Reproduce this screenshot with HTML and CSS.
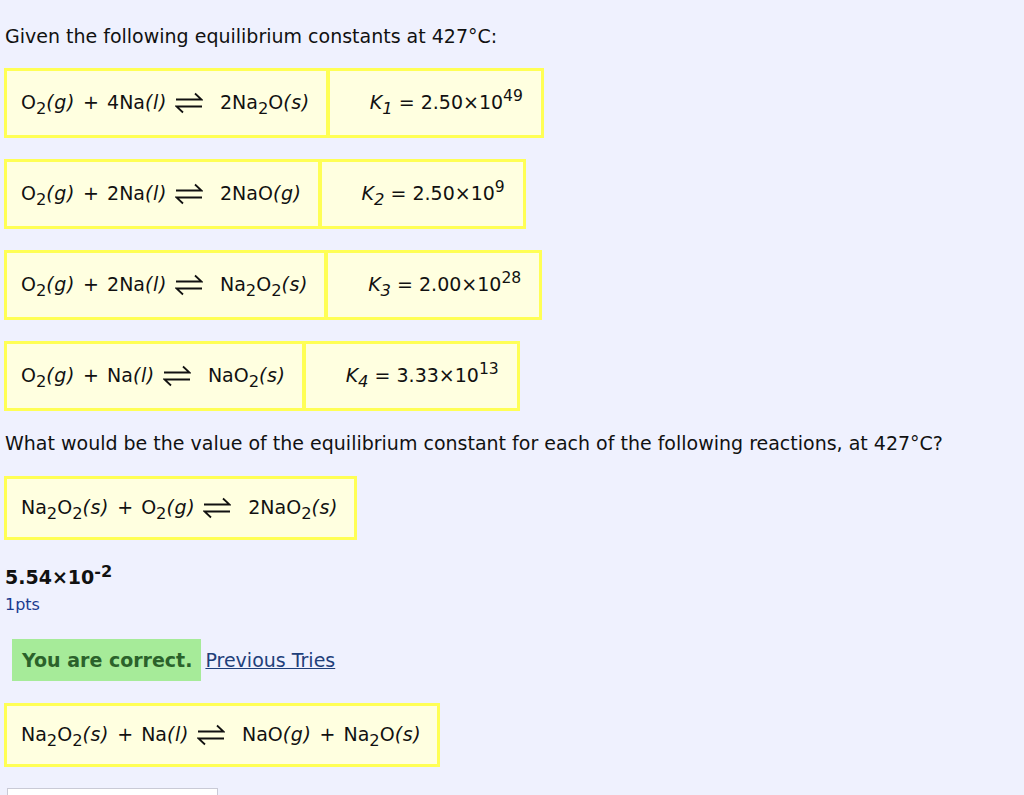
FILE: index.html
```html
<!DOCTYPE html>
<html>
<head>
<meta charset="utf-8">
<link rel="stylesheet" href="styles.css">
</head>
<body>
<div class="page">
  <p class="intro">Given the following equilibrium constants at 427°C:</p>

  <div class="eq-box">
    <div class="cell eq">O<sub>2</sub><i>(g)</i> + 4Na<i>(l)</i> <svg class="arrow" viewBox="0 0 28 22" width="28" height="22"><path d="M1 7.5H26.5L20 1.5M27 14.5H1.5L8 20.5" /></svg> 2Na<sub>2</sub>O<i>(s)</i></div>
    <div class="cell k"><i>K<sub>1</sub></i> = 2.50×10<sup>49</sup></div>
  </div>

  <div class="eq-box">
    <div class="cell eq">O<sub>2</sub><i>(g)</i> + 2Na<i>(l)</i> <svg class="arrow" viewBox="0 0 28 22" width="28" height="22"><path d="M1 7.5H26.5L20 1.5M27 14.5H1.5L8 20.5" /></svg> 2NaO<i>(g)</i></div>
    <div class="cell k"><i>K<sub>2</sub></i> = 2.50×10<sup>9</sup></div>
  </div>

  <div class="eq-box">
    <div class="cell eq">O<sub>2</sub><i>(g)</i> + 2Na<i>(l)</i> <svg class="arrow" viewBox="0 0 28 22" width="28" height="22"><path d="M1 7.5H26.5L20 1.5M27 14.5H1.5L8 20.5" /></svg> Na<sub>2</sub>O<sub>2</sub><i>(s)</i></div>
    <div class="cell k"><i>K<sub>3</sub></i> = 2.00×10<sup>28</sup></div>
  </div>

  <div class="eq-box">
    <div class="cell eq">O<sub>2</sub><i>(g)</i> + Na<i>(l)</i> <svg class="arrow" viewBox="0 0 28 22" width="28" height="22"><path d="M1 7.5H26.5L20 1.5M27 14.5H1.5L8 20.5" /></svg> NaO<sub>2</sub><i>(s)</i></div>
    <div class="cell k"><i>K<sub>4</sub></i> = 3.33×10<sup>13</sup></div>
  </div>

  <p class="question">What would be the value of the equilibrium constant for each of the following reactions, at 427°C?</p>

  <div class="eq-box single">
    <div class="cell eq">Na<sub>2</sub>O<sub>2</sub><i>(s)</i> + O<sub>2</sub><i>(g)</i> <svg class="arrow" viewBox="0 0 28 22" width="28" height="22"><path d="M1 7.5H26.5L20 1.5M27 14.5H1.5L8 20.5" /></svg> 2NaO<sub>2</sub><i>(s)</i></div>
  </div>

  <div class="answer">5.54×10<sup>-2</sup></div>
  <div class="pts">1pts</div>

  <div class="feedback">
    <span class="correct">You are correct.</span>
    <a class="tries" href="#">Previous Tries</a>
  </div>

  <div class="eq-box single second">
    <div class="cell eq">Na<sub>2</sub>O<sub>2</sub><i>(s)</i> + Na<i>(l)</i> <svg class="arrow" viewBox="0 0 28 22" width="28" height="22"><path d="M1 7.5H26.5L20 1.5M27 14.5H1.5L8 20.5" /></svg> NaO<i>(g)</i> + Na<sub>2</sub>O<i>(s)</i></div>
  </div>

  <div class="input-box"></div>
</div>
</body>
</html>
```

FILE: styles.css
```css
html, body {
  margin: 0;
  padding: 0;
  background: #eff1fe;
}
body {
  font-family: "DejaVu Sans", Verdana, sans-serif;
  font-size: 19px;
  color: #111;
  height: 795px;
  overflow: hidden;
}
.page {
  padding: 0 0 0 4px;
}
p {
  margin: 0;
}
.intro {
  padding-top: 25px;
  padding-left: 1px;
  line-height: 22px;
  margin-bottom: 21px;
}
.eq-box {
  display: flex;
  width: max-content;
  border: 3px solid #ffff55;
  background: #ffffe0;
  margin-bottom: 21px;
}
.cell {
  height: 64px;
  box-sizing: border-box;
  white-space: nowrap;
  line-height: 22px;
  padding-top: 20px;
}
.cell.eq {
  padding-left: 14px;
  padding-right: 16px;
  word-spacing: 2px;
}
.cell.eq i {
  letter-spacing: 0.6px;
}
.cell.k {
  border-left: 4px solid #ffff55;
  padding-left: 40px;
  padding-right: 18px;
}
sub {
  font-size: 0.86em;
  vertical-align: -0.3em;
  line-height: 0;
}
sup {
  font-size: 0.82em;
  vertical-align: 0.5em;
  line-height: 0;
}
.arrow {
  display: inline-block;
  vertical-align: -5px;
  margin: 0 9px 0 0;
}
.arrow path {
  fill: none;
  stroke: #111;
  stroke-width: 1.8;
}
.question {
  line-height: 22px;
  padding-left: 1px;
  margin-top: 11px;
  margin-bottom: 22px;
}
.eq-box.single .cell {
  height: 58px;
  padding-top: 17px;
}
.eq-box.single {
  margin-bottom: 26px;
}
.answer {
  font-weight: bold;
  padding-left: 1px;
  line-height: 22px;
}
.answer sup {
  font-size: 0.85em;
  vertical-align: 0.45em;
}
.pts {
  font-size: 16px;
  color: #1b3b8f;
  padding-left: 1px;
  margin-top: 8px;
  line-height: 18px;
}
.feedback {
  display: flex;
  align-items: center;
  margin-top: 25px;
  padding-left: 8px;
  margin-bottom: 22px;
}
.correct {
  background: #a6eb99;
  color: #2b622b;
  font-weight: bold;
  padding: 0 9px 0 10px;
  height: 42px;
  line-height: 42px;
}
.tries {
  color: #1f3f7a;
  text-decoration: underline;
  margin-left: 4px;
}
.eq-box.second {
  margin-bottom: 21px;
}
.input-box {
  width: 209px;
  height: 30px;
  margin-left: 3px;
  background: #fff;
  border: 1px solid #c9cad6;
}
```
